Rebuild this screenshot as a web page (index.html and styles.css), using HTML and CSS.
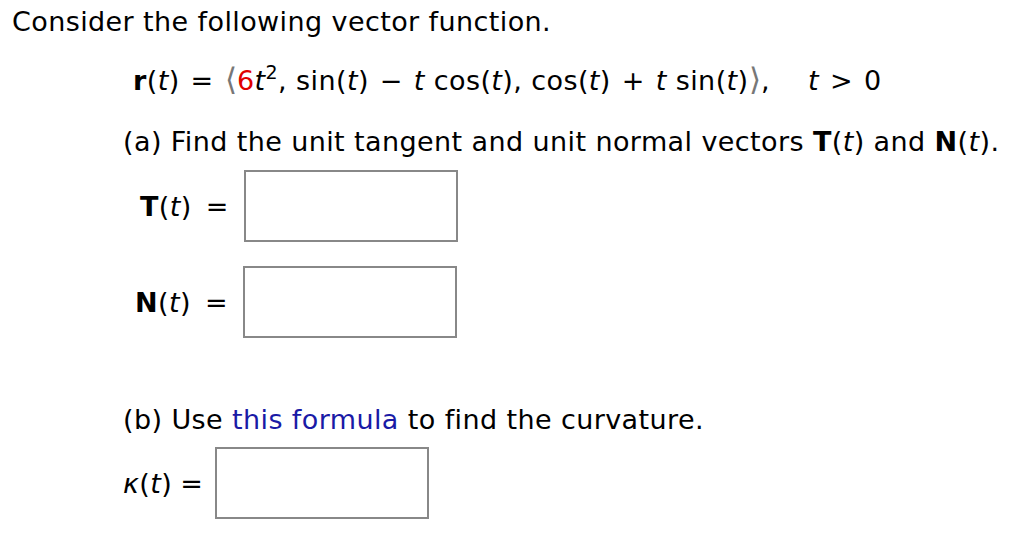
FILE: index.html
```html
<!DOCTYPE html>
<html>
<head>
<meta charset="utf-8">
<link rel="stylesheet" href="styles.css">
</head>
<body>
<div class="page">
  <p class="intro">Consider the following vector function.</p>
  <p class="eq"><b>r</b>(<i>t</i>) <span class="op">=</span> <span class="br">⟨</span><span class="red">6</span><i>t</i><sup>2</sup>, sin(<i>t</i>) <span class="op">−</span> <i>t</i> cos(<i>t</i>), cos(<i>t</i>) <span class="op">+</span> <i>t</i> sin(<i>t</i>)<span class="br">⟩</span>,<span class="sp"></span><i>t</i> <span class="op">&gt;</span> 0</p>
  <p class="part">(a) Find the unit tangent and unit normal vectors <b>T</b>(<i>t</i>) and <b>N</b>(<i>t</i>).</p>
  <div class="row row-t">
    <span class="lbl"><b>T</b>(<i>t</i>)</span><span class="eqs">=</span><span class="box"></span>
  </div>
  <div class="row row-n">
    <span class="lbl"><b>N</b>(<i>t</i>)</span><span class="eqs">=</span><span class="box"></span>
  </div>
  <p class="part part-b">(b) Use <a class="link">this formula</a> to find the curvature.</p>
  <div class="row row-k">
    <span class="lbl"><i>κ</i>(<i>t</i>)</span><span class="eqs">=</span><span class="box"></span>
  </div>
</div>
</body>
</html>
```
FILE: styles.css
```css
html, body {
  margin: 0;
  padding: 0;
  background: #fff;
}
body {
  font-family: "DejaVu Sans", Verdana, sans-serif;
  font-size: 27px;
  letter-spacing: 0.4px;
  color: #000;
}
.page {
  padding-top: 4px;
}
p {
  margin: 0;
}
.intro {
  padding-left: 12px;
  line-height: 36px;
}
.eq {
  padding-left: 133px;
  margin-top: 19px;
  line-height: 40px;
}
.eq .op {
  margin: 0 2px;
}
.eq sup {
  font-size: 19px;
  line-height: 0;
  vertical-align: 11px;
}
.red {
  color: #e00000;
}
.br {
  color: #777;
  font-size: 31px;
  font-weight: 300;
}
.sp {
  display: inline-block;
  width: 38px;
}
.part {
  padding-left: 123px;
  margin-top: 21px;
  line-height: 40px;
}
.row {
  display: flex;
  align-items: center;
}
.box {
  display: inline-block;
  width: 210px;
  height: 68px;
  border: 2px solid #888;
  background: #fff;
}
.row-t {
  margin-top: 8px;
  padding-left: 140px;
}
.row-t .eqs, .row-n .eqs {
  margin-left: 14px;
  margin-right: 15px;
}
.row-n {
  margin-top: 24px;
  padding-left: 135px;
}
.part-b {
  margin-top: 62px;
}
.link {
  color: #1a1aa6;
  text-decoration: none;
}
.row-k {
  margin-top: 7px;
  padding-left: 123px;
}
.row-k .eqs {
  margin-left: 8px;
  margin-right: 12px;
}
```
